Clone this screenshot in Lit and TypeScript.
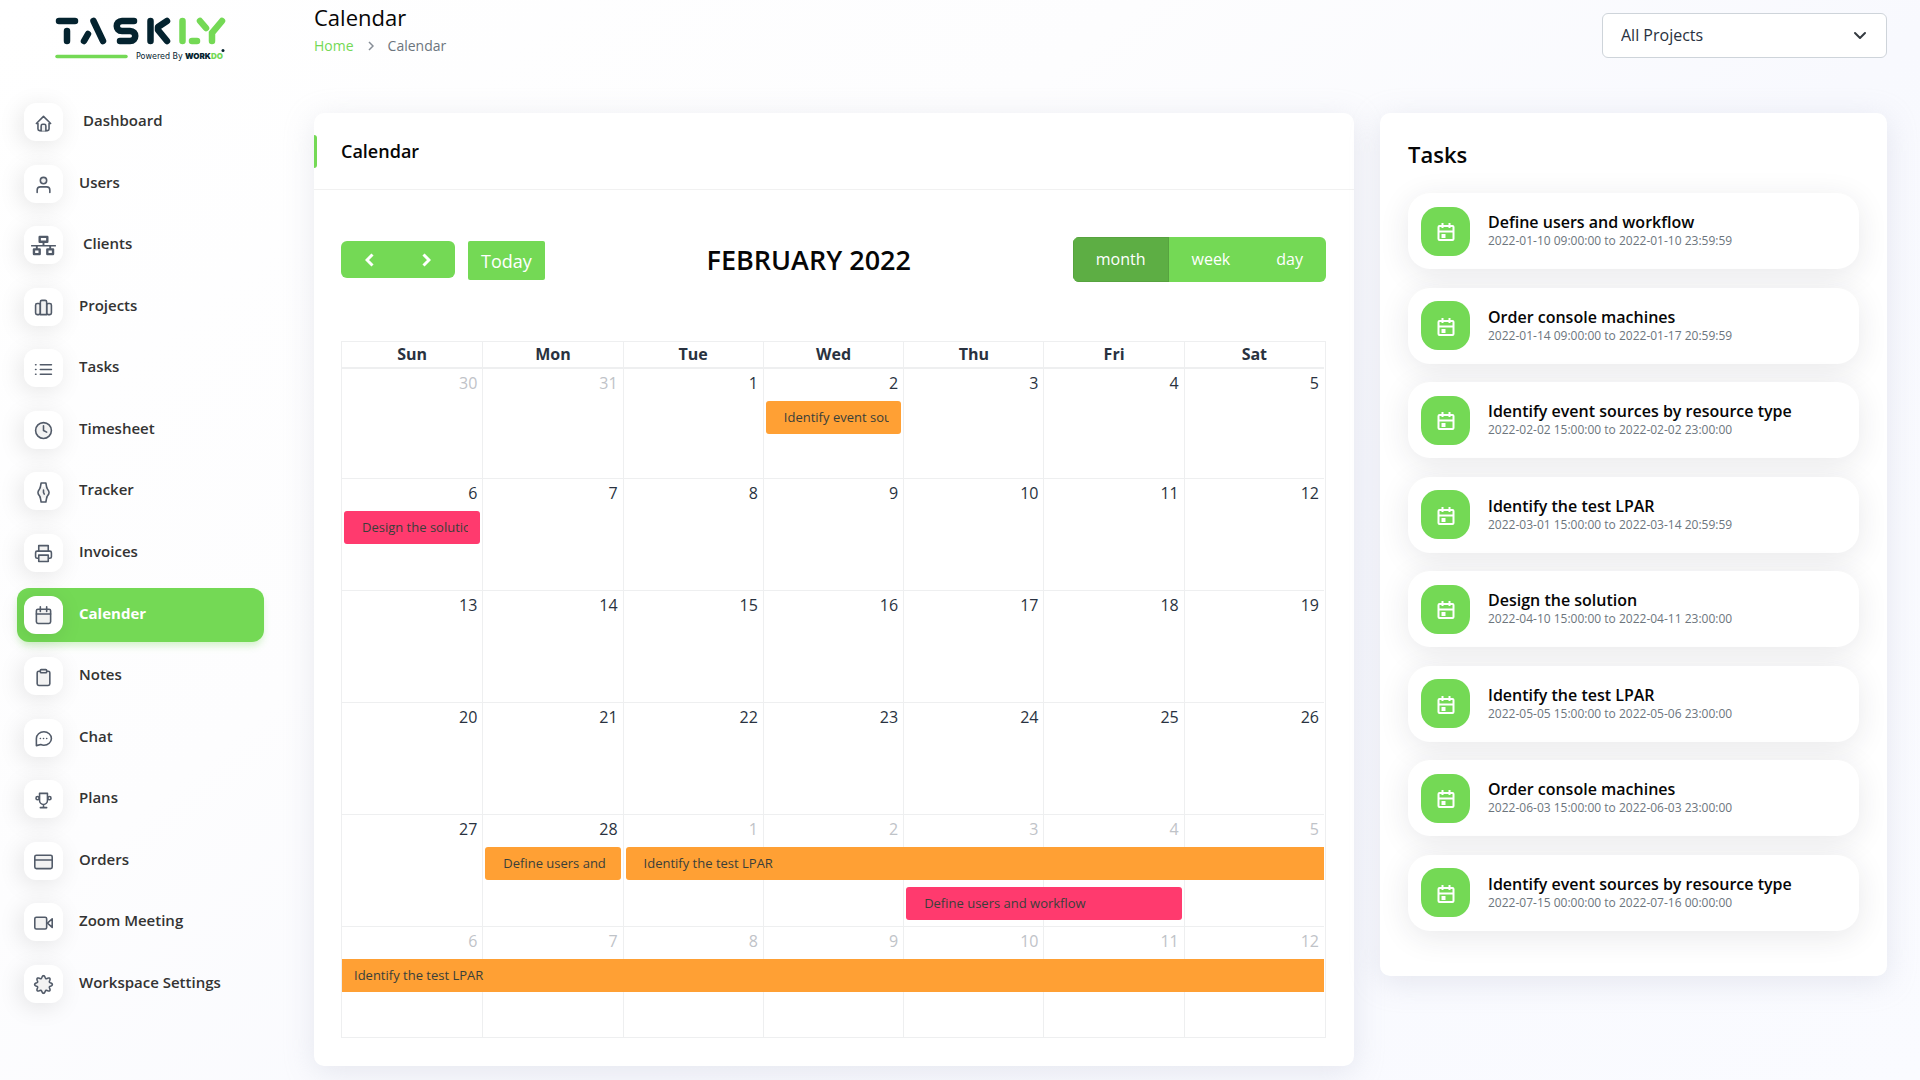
import { LitElement, html, svg, css } from "lit";
import { customElement } from "lit/decorators.js";

/* Eight-lobed cog outline sampled around the centre of a 24-unit box. */
const cogPath =
  Array.from({ length: 96 }, (_, i) => {
    const a = (i / 96) * Math.PI * 2;
    const r = 9.6 + 1.6 * Math.cos(8 * a);
    return `${i ? "L" : "M"}${(12 + r * Math.sin(a)).toFixed(2)} ${(12 - r * Math.cos(a)).toFixed(2)}`;
  }).join("") + "z";

const icons: Record<string, unknown> = {
  home: svg`<path d="M5 12H3l9-9 9 9h-2M5 12v7a2 2 0 0 0 2 2h10a2 2 0 0 0 2-2v-7"/><path d="M9 21v-6a2 2 0 0 1 2-2h2a2 2 0 0 1 2 2v6" fill="#f2f2f2"/>`,
  user: svg`<circle cx="12" cy="7" r="4" fill="#f2f2f2"/><path d="M4 22v-3a4 4 0 0 1 4-4h8a4 4 0 0 1 4 4v3"/>`,
  briefcase: svg`<rect x="2" y="7" width="6" height="14" rx="2" fill="#f2f2f2"/><rect x="16" y="7" width="6" height="14" rx="2" fill="#f2f2f2"/><path d="M8 21V5a2 2 0 0 1 2-2h4a2 2 0 0 1 2 2v16z" fill="#f2f2f2"/>`,
  list: svg`<path d="M8 6h14M8 12h14M8 18h14M2 6h.5M2 12h.5M2 18h.5"/>`,
  clock: svg`<circle cx="12" cy="12" r="10" fill="#f2f2f2"/><path d="M12 6v6l4 2"/>`,
  watch: svg`<path d="M8 5.500L9 0h6l1 5.500M8 18.500L9 24h6l1-5.500"/><path d="M8 5.500c0 2-3 3-3 6.500s3 4.500 3 6.500h8c0-2 3-3 3-6.500s-3-4.500-3-6.500" fill="#f2f2f2" stroke="none"/><path d="M8 5.500c0 2-3 3-3 6.500s3 4.500 3 6.500M16 5.500c0 2 3 3 3 6.500s-3 4.500-3 6.500M12 9v3l1 2"/>`,
  printer: svg`<path d="M6 9V2h12v7" fill="#f2f2f2"/><path d="M6 18H4a2 2 0 0 1-2-2v-5a2 2 0 0 1 2-2h16a2 2 0 0 1 2 2v5a2 2 0 0 1-2 2h-2"/><rect x="6" y="14" width="12" height="8" fill="#f2f2f2"/>`,
  calendar: svg`<rect x="3" y="4" width="18" height="18" rx="2" fill="#f2f2f2"/><path d="M16 1v6M8 1v6M3 10h18"/>`,
  clipboard: svg`<rect x="4" y="4" width="16" height="18" rx="2" fill="#f2f2f2"/><rect x="8" y="2" width="8" height="4" rx="1" fill="#f2f2f2"/>`,
  chat: svg`<path d="M3 21v-9a9.500 8.500 0 1 1 9.500 8.500 10 10 0 0 1-4-1z"/><path d="M8 12h.1M12 12h.1M16 12h.1"/>`,
  trophy: svg`<path d="M8 21h8M12 17v4M7 3h10M17 3v9a5 5 0 0 1-10 0V3"/><circle cx="4.500" cy="9" r="2"/><circle cx="19.500" cy="9" r="2"/>`,
  card: svg`<rect x="1" y="4" width="22" height="17" rx="2" fill="#f2f2f2"/><path d="M1 10h22"/>`,
  video: svg`<path d="M23 6l-6 5.500 6 5.500z"/><rect x="1" y="4" width="15" height="15" rx="2" fill="#f2f2f2"/>`,
  gear: svg`<path fill="#f2f2f2" d=${cogPath}/>`,
};

const clientsIcon = html`<svg class="glyph wide" viewBox="0 0 26 22" aria-hidden="true">
  <g fill="none" stroke="#525b69" stroke-width="2.500"><rect x="9" y="2" width="8" height="5"/><rect x="3" y="15" width="6" height="5"/><rect x="17" y="15" width="6" height="5"/></g>
  <path d="M0 10.500h26v1.500H0zM12 8h2v4h-2zM5 11h2v4H5zM19 11h2v4h-2z" fill="#525b69"/>
</svg>`;

const glyph = (name: string) =>
  name === "clients" ? clientsIcon : html`<svg class="glyph" viewBox="0 0 24 24" aria-hidden="true">${icons[name]}</svg>`;

const nav = [
  { icon: "home", label: "Dashboard", indent: true },
  { icon: "user", label: "Users" },
  { icon: "clients", label: "Clients", indent: true },
  { icon: "briefcase", label: "Projects" },
  { icon: "list", label: "Tasks" },
  { icon: "clock", label: "Timesheet" },
  { icon: "watch", label: "Tracker" },
  { icon: "printer", label: "Invoices" },
  { icon: "calendar", label: "Calender", active: true },
  { icon: "clipboard", label: "Notes" },
  { icon: "chat", label: "Chat" },
  { icon: "trophy", label: "Plans" },
  { icon: "card", label: "Orders" },
  { icon: "video", label: "Zoom Meeting" },
  { icon: "gear", label: "Workspace Settings" },
];

const tasks = [
  ["Define users and workflow", "2022-01-10 09:00:00", "2022-01-10 23:59:59"],
  ["Order console machines", "2022-01-14 09:00:00", "2022-01-17 20:59:59"],
  ["Identify event sources by resource type", "2022-02-02 15:00:00", "2022-02-02 23:00:00"],
  ["Identify the test LPAR", "2022-03-01 15:00:00", "2022-03-14 20:59:59"],
  ["Design the solution", "2022-04-10 15:00:00", "2022-04-11 23:00:00"],
  ["Identify the test LPAR", "2022-05-05 15:00:00", "2022-05-06 23:00:00"],
  ["Order console machines", "2022-06-03 15:00:00", "2022-06-03 23:00:00"],
  ["Identify event sources by resource type", "2022-07-15 00:00:00", "2022-07-16 00:00:00"],
];

const dayNames = ["Sun", "Mon", "Tue", "Wed", "Thu", "Fri", "Sat"];

interface CalEvent {
  title: string;
  span: number;
  tone: "orange" | "pink";
  lane?: number;
  from?: boolean;
  to?: boolean;
}

/* Events keyed by the index of the cell in which their segment begins. */
const events: Record<number, CalEvent> = {
  3: { title: "Identify event sources by resource type", span: 1, tone: "orange" },
  7: { title: "Design the solution", span: 1, tone: "pink" },
  29: { title: "Define users and workflow", span: 1, tone: "orange" },
  30: { title: "Identify the test LPAR", span: 5, tone: "orange", to: true },
  32: { title: "Define users and workflow", span: 2, tone: "pink", lane: 1 },
  35: { title: "Identify the test LPAR", span: 7, tone: "orange", from: true, to: true },
};

const cells = Array.from({ length: 42 }, (_, i) => {
  if (i < 2) return { day: 30 + i, other: true };
  if (i < 30) return { day: i - 1, other: false };
  return { day: i - 29, other: true };
});

@customElement("app-root")
export class AppRoot extends LitElement {
  static styles = css`
    :host {
      display: flex;
      align-items: flex-start;
      min-height: 100vh;
      font-family: "Open Sans", "Noto Sans", sans-serif;
      font-size: 16px;
      line-height: 24px;
      color: #293240;
      background: linear-gradient(141deg, #ffffff 0%, #fdfdfe 35%, #f8f9fe 60%, #fafbff 100%);
      --green: #74d955;
    }
    *, *::before { box-sizing: border-box; }
    h1, h2, h3, p, ul, ol { margin: 0; padding: 0; }
    ul, ol { list-style: none; }
    a { color: inherit; text-decoration: none; }
    button { font: inherit; color: #fff; background: var(--green); border: 0; padding: 0; cursor: pointer; }

    .sidebar { flex: 0 0 280px; display: flex; flex-direction: column; gap: 34px; padding: 16px 16px 0 17px; }
    .logo { display: block; width: 172px; height: 45px; margin-left: 38px; overflow: visible; }
    .menu { display: flex; flex-direction: column; justify-content: space-between; height: 916px; }
    .item { display: flex; align-items: center; gap: 16px; width: 247px; height: 54px; padding: 0 7px; border-radius: 12px; font-size: 15px; font-weight: 600; color: #333; }
    .item.active { background: var(--green); color: #fff; font-weight: 700; box-shadow: 0 5px 7px -1px rgba(116, 217, 85, 0.3); }
    .tile { flex: none; display: grid; place-items: center; width: 39px; height: 38px; border-radius: 12px; background: #fff; box-shadow: -3px 4px 23px rgba(0, 0, 0, 0.1); }
    .label { padding-bottom: 4px; }
    .indent { padding-left: 4px; }
    .glyph { width: 19px; height: 19px; margin-top: 2px; fill: none; stroke: #525b69; stroke-width: 2; stroke-linecap: round; stroke-linejoin: round; overflow: visible; }
    .glyph.wide { width: 25px; height: 21px; stroke: none; margin-top: 0; }

    .main { flex: 1; min-width: 0; padding: 4px 33px 15px 34px; }
    .topbar { display: flex; justify-content: space-between; align-items: flex-start; height: 109px; }
    .title { font-size: 22px; line-height: 27px; font-weight: 400; color: #060606; }
    .crumbs { display: flex; align-items: center; font-size: 14px; line-height: 30px; color: #6c757d; }
    .crumbs a { color: var(--green); }
    .crumbs svg { width: 6px; height: 10px; margin: 0 14px; fill: none; stroke: #868d96; stroke-width: 1.5; }
    .crumbs li { display: flex; align-items: center; }
    .picker { position: relative; width: 285px; margin-top: 9px; }
    .picker select { appearance: none; width: 100%; height: 45px; padding: 0 18px 2px; font: inherit; color: #293240; background: #fff; border: 1px solid #ced4da; border-radius: 6px; }
    .picker svg { position: absolute; right: 20px; top: 17px; width: 14px; height: 12px; fill: none; stroke: #343a40; stroke-width: 2; stroke-linecap: round; stroke-linejoin: round; pointer-events: none; }

    .columns { display: grid; grid-template-columns: minmax(0, 1040fr) minmax(0, 507fr); gap: 26px; align-items: start; }
    .card { background: #fff; border-radius: 10px; box-shadow: 0 6px 30px rgba(182, 186, 203, 0.3); }
    .card-head { display: flex; align-items: center; height: 77px; border-bottom: 1px solid #f1f1f1; }
    .card-head::before { content: ""; width: 3px; height: 33px; background: var(--green); border-radius: 0 3px 3px 0; }
    .card-head h2 { margin-left: 24px; font-size: 18px; font-weight: 600; color: #060606; }
    .card-body { padding: 47px 28px 28px 27px; }

    .toolbar { display: flex; justify-content: space-between; align-items: center; height: 45px; margin-bottom: 59px; }
    .left { display: flex; gap: 13px; align-items: flex-start; height: 37px; }
    .group { display: flex; border-radius: 6px; overflow: hidden; }
    .step { display: grid; place-items: center; width: 57px; height: 37px; }
    .step svg { width: 9px; height: 14px; fill: none; stroke: #fff; stroke-width: 3; }
    .today { height: 39px; padding: 0 13px; font-size: 18px; border-radius: 2px; }
    .month { font-size: 27px; line-height: 36px; font-weight: 600; color: #060606; }
    .views button { height: 45px; padding: 0 23px 2px; }
    .views .on { background: #5dae44; box-shadow: inset 0 0 0 1px #57a33f; }

    .grid { display: grid; grid-template-columns: repeat(7, minmax(0, 1fr)); grid-template-rows: 27px 110px repeat(4, 112px) 110px; padding-right: 1px; border: 1px solid #eeeff0; }
    .dow { text-align: center; font-weight: 700; border-left: 1px solid #eeeff0; border-bottom: 2px solid #eeeff0; }
    .cell { position: relative; border-left: 1px solid #eeeff0; border-bottom: 1px solid #eeeff0; }
    .dow:nth-child(7n + 1), .cell:nth-child(7n + 1) { border-left: 0; }
    .cell:nth-last-child(-n + 7) { border-bottom: 0; }
    .num { display: block; padding: 2px 5px 0 0; text-align: right; }
    .other .num { color: #bfc3c8; }
    .event { position: absolute; z-index: 1; top: 32px; left: 2px; height: 33px; padding: 0 12px 0 18px; border-radius: 3px; font-size: 13px; line-height: 33px; color: #3a3f3a; }
    .event span { display: block; overflow: hidden; white-space: nowrap; }
    .event.second { top: 72px; }
    .event.from { left: 0; padding-left: 12px; border-radius: 0; }
    .event.to { border-top-right-radius: 0; border-bottom-right-radius: 0; }
    .orange { background: #ffa034; }
    .pink { background: #ff3a6e; }

    .tasks { padding: 26px 28px 45px; }
    .tasks h2 { font-size: 22px; line-height: 30px; font-weight: 600; color: #060606; }
    .tasks ul { display: flex; flex-direction: column; justify-content: space-between; height: 738px; margin-top: 24px; }
    .task { display: flex; align-items: center; gap: 18px; height: 76px; padding: 0 13px; border-radius: 22px; background: #fff; box-shadow: 0 6px 30px rgba(40, 40, 60, 0.1); }
    .badge { flex: none; display: grid; place-items: center; width: 49px; height: 49px; border-radius: 17px; background: var(--green); }
    .badge svg { width: 18px; height: 20px; margin-top: 2px; fill: none; stroke: #fff; stroke-width: 2; stroke-linejoin: round; }
    .task h3 { font-size: 16px; line-height: 20px; font-weight: 600; color: #060606; }
    .task p { font-size: 12px; line-height: 18px; color: #6c757d; }
  `;

  private logo() {
    return html`<svg class="logo" viewBox="0 0 172 45" role="img" aria-label="Taskly">
      <g fill="none" stroke="#04232f" stroke-width="6.500" stroke-linecap="round" stroke-linejoin="round">
        <path d="M4 5H20M12 15v10M29 25l4-7M38.500 5l9.500 20M79 5H67c-7 0-7 10 0 10h8c7 0 7 10 0 10H65M95.500 5v20M112 5l-9 6v3l9 11"/>
      </g>
      <g fill="none" stroke="#74d955" stroke-width="6.500" stroke-linecap="round">
        <path d="M127.500 5v20M137 25h5M145 5l6 7M167 5l-10 12v8"/>
      </g>
      <path d="M2 40.500h69" stroke="#74d955" stroke-width="3.500" stroke-linecap="round"/>
      <text x="81" y="43" font-family="DejaVu Sans, sans-serif" font-size="8" fill="#04232f">Powered By</text>
      <text x="130" y="43" font-family="Inter, sans-serif" font-weight="900" font-size="8" fill="#04232f">WORK<tspan fill="#74d955">DO</tspan></text>
      <circle cx="168" cy="34.500" r="1.500" fill="#04232f"/>
    </svg>`;
  }

  private event(e: CalEvent) {
    const trim = e.from ? 0 : e.to ? 3 - e.span : 5 - e.span;
    return html`<div
      class="event ${e.tone} ${e.lane ? "second" : ""} ${e.from ? "from" : ""} ${e.to ? "to" : ""}"
      style="width: calc(${e.span * 100}% - ${trim}px)"
    ><span>${e.title}</span></div>`;
  }

  render() {
    return html`
      <aside class="sidebar">
        <a href="#">${this.logo()}</a>
        <nav class="menu">
          ${nav.map(
            (n) => html`<a class="item ${n.active ? "active" : ""}" href="#">
              <span class="tile">${glyph(n.icon)}</span><span class="label ${n.indent ? "indent" : ""}">${n.label}</span>
            </a>`
          )}
        </nav>
      </aside>
      <main class="main">
        <header class="topbar">
          <div>
            <h1 class="title">Calendar</h1>
            <ol class="crumbs">
              <li><a href="#">Home</a><svg viewBox="0 0 6 10" aria-hidden="true"><path d="M1 1l4 4-4 4"/></svg></li>
              <li>Calendar</li>
            </ol>
          </div>
          <div class="picker">
            <select aria-label="Project"><option>All Projects</option></select>
            <svg viewBox="0 0 14 12" aria-hidden="true"><path d="M2 3l5 5 5-5"/></svg>
          </div>
        </header>
        <div class="columns">
          <section class="card">
            <header class="card-head"><h2>Calendar</h2></header>
            <div class="card-body">
              <div class="toolbar">
                <div class="left">
                  <div class="group">
                    <button class="step" aria-label="Previous"><svg viewBox="0 0 9 14"><path d="M7.500 1.500L2 7l5.500 5.500"/></svg></button>
                    <button class="step" aria-label="Next"><svg viewBox="0 0 9 14"><path d="M1.500 1.500L7 7l-5.500 5.500"/></svg></button>
                  </div>
                  <button class="today">Today</button>
                </div>
                <h2 class="month">FEBRUARY 2022</h2>
                <div class="group views"><button class="on">month</button><button>week</button><button>day</button></div>
              </div>
              <div class="grid">
                ${dayNames.map((d) => html`<div class="dow">${d}</div>`)}
                ${cells.map(
                  (c, i) => html`<div class="cell ${c.other ? "other" : ""}">
                    <span class="num">${c.day}</span>${events[i] ? this.event(events[i]) : ""}
                  </div>`
                )}
              </div>
            </div>
          </section>
          <section class="card tasks">
            <h2>Tasks</h2>
            <ul>
              ${tasks.map(
                ([name, start, end]) => html`<li class="task">
                  <span class="badge"><svg viewBox="0 0 18 20" aria-hidden="true"><rect x="1.500" y="4" width="15" height="14" rx="1"/><path d="M2 9.500h14M5.500 1v5M12.500 1v5"/><path d="M4.500 12h4v4h-4z" fill="#fff" stroke="none"/></svg></span>
                  <div><h3>${name}</h3><p>${start} to ${end}</p></div>
                </li>`
              )}
            </ul>
          </section>
        </div>
      </main>
    `;
  }
}
